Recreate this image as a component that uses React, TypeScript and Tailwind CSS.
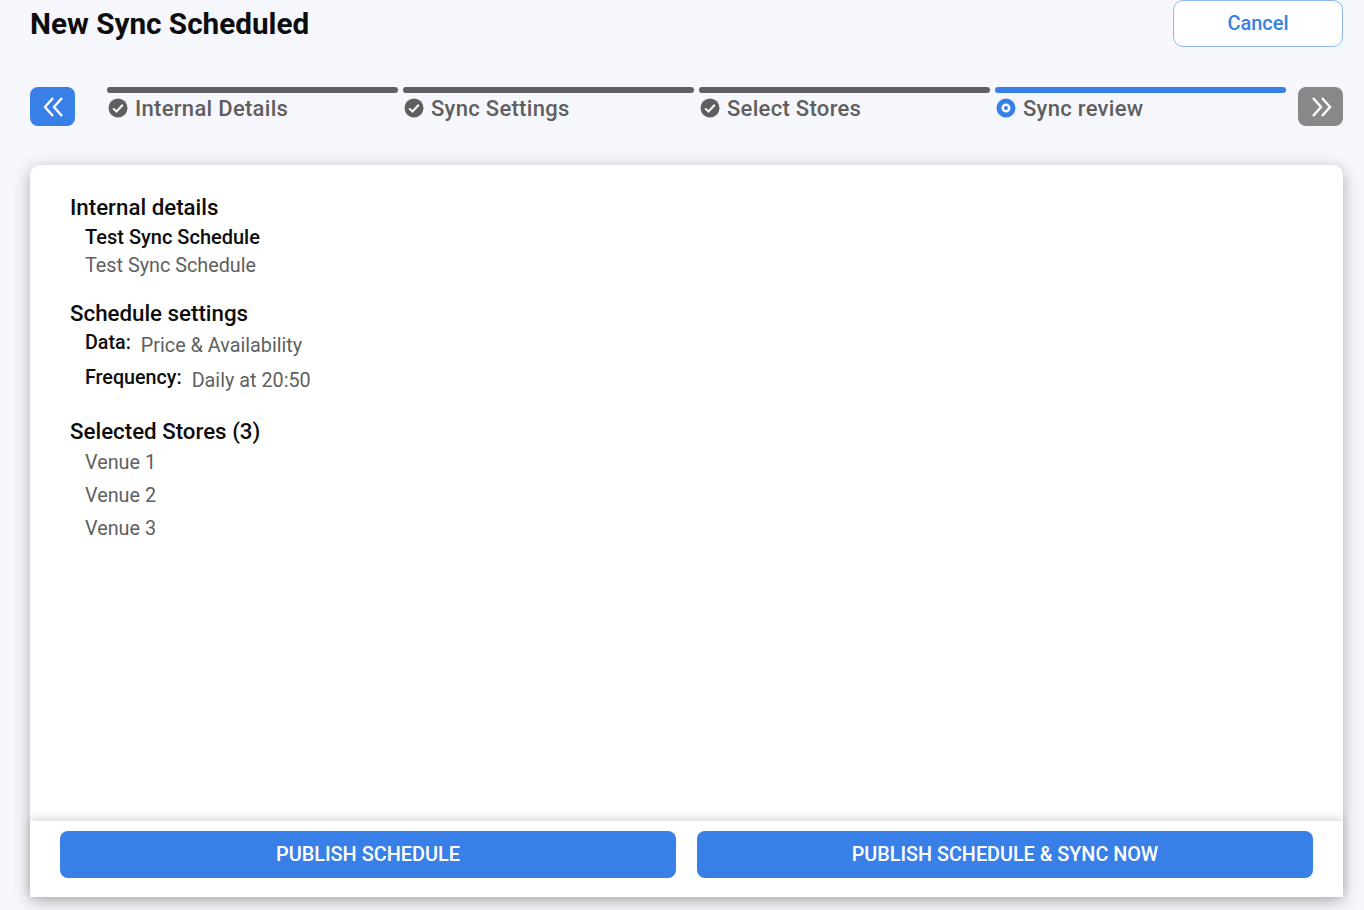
const steps = ["Internal Details", "Sync Settings", "Select Stores", "Sync review"]

const CheckIcon = () => (
  <svg viewBox="0 0 20 20" className="h-5 w-5 shrink-0">
    <circle cx="10" cy="10" r="9.5" fill="#5f5f5f" />
    <path d="M5.2 10.4l3.2 3.2 6.4-6.9" fill="none" stroke="#fff" strokeWidth="2" />
  </svg>
)

const ActiveIcon = () => (
  <svg viewBox="0 0 20 20" className="h-5 w-5 shrink-0">
    <circle cx="10" cy="10" r="7" fill="none" stroke="#3880e8" strokeWidth="5" />
    <circle cx="10" cy="10" r="2" fill="#3880e8" />
  </svg>
)

const DoubleChevron = ({ flip }: { flip?: boolean }) => (
  <svg viewBox="0 0 24 24" className={`h-6 w-6 ${flip ? "ml-[3px] rotate-180" : ""}`} fill="none" stroke="#fff" strokeWidth="2.4">
    <path d="M12 3l-8 9 8 9" />
    <path d="M21 3l-8 9 8 9" />
  </svg>
)

const Step = ({ label, active }: { label: string; active: boolean }) => (
  <div className="flex-1">
    <div className={`h-[6px] rounded-full ${active ? "bg-[#3880e8]" : "bg-[#5f5f5f]"}`} />
    <div className="mt-[2px] flex h-[26px] items-center gap-[7px] pl-[1px]">
      {active ? <ActiveIcon /> : <CheckIcon />}
      <span className="pt-[1px] text-[22px] leading-[26px] font-medium tracking-[0.3px] text-[#5f5f5f]">{label}</span>
    </div>
  </div>
)

const Detail = ({ label, value }: { label: string; value: string }) => (
  <div className="flex h-[35px] gap-[10px] pl-[15px]">
    <span className="text-[19.7px] leading-[26px] font-medium text-[#0d0d0d]">{label}</span>
    <span className="mt-[2px] text-[19.8px] leading-[28px] text-[#5f5f5f]">{value}</span>
  </div>
)

const Venue = ({ name }: { name: string }) => (
  <div className="h-[33px] pl-[15px] text-[19.8px] leading-[28px] text-[#5f5f5f]">{name}</div>
)

export default function App() {
  return (
    <div className="flex h-[910px] w-full flex-col overflow-hidden bg-[#f6f7fd] pr-[21px] pb-[13px] pl-[30px] font-['Roboto',sans-serif]">
      <div className="flex items-start justify-between">
        <h1 className="text-[29.7px] leading-[47px] font-bold text-[#0d0d0d]">New Sync Scheduled</h1>
        <button className="h-[47px] w-[170px] rounded-[10px] border border-[#8db8f2] bg-white pb-[2px] text-[20px] font-medium text-[#3880e8]">
          Cancel
        </button>
      </div>

      <div className="mt-[40px] flex items-start">
        <button className="flex h-[39px] w-[45px] items-center justify-center rounded-[8px] bg-[#3880e8]">
          <DoubleChevron />
        </button>
        <div className="mx-[12px] ml-[32px] flex flex-1 gap-[5px]">
          {steps.map((step, i) => (
            <Step key={step} label={step} active={i === steps.length - 1} />
          ))}
        </div>
        <button className="flex h-[39px] w-[45px] items-center justify-center rounded-[8px] bg-[#888888]">
          <DoubleChevron flip />
        </button>
      </div>

      <div className="mt-[39px] flex flex-1 flex-col rounded-t-[10px] bg-white shadow-[0_4px_16px_rgba(0,0,0,0.3)]">
        <div className="flex-1 pt-[28px] pl-[40px]">
          <h2 className="text-[22.3px] leading-[28px] font-medium text-[#0d0d0d]">Internal details</h2>
          <div className="mt-[2px] pl-[15px] text-[20px] leading-[28px] font-medium text-[#0d0d0d]">Test Sync Schedule</div>
          <div className="mt-[1px] pl-[15px] text-[19.8px] leading-[28px] text-[#5f5f5f]">Test Sync Schedule</div>

          <h2 className="mt-[19px] mb-[3px] text-[22.3px] leading-[28px] font-medium text-[#0d0d0d]">Schedule settings</h2>
          <Detail label="Data:" value="Price & Availability" />
          <Detail label="Frequency:" value="Daily at 20:50" />

          <h2 className="mt-[17px] mb-[4px] text-[22.3px] leading-[28px] font-medium text-[#0d0d0d]">Selected Stores (3)</h2>
          <Venue name="Venue 1" />
          <Venue name="Venue 2" />
          <Venue name="Venue 3" />
        </div>

        <div className="flex h-[76px] gap-[21px] px-[30px] pt-[10px] shadow-[0_-3px_8px_rgba(0,0,0,0.14)]">
          <button className="h-[47px] flex-1 rounded-[8px] bg-[#3880e8] text-[19.9px] font-medium text-white">
            PUBLISH SCHEDULE
          </button>
          <button className="h-[47px] flex-1 rounded-[8px] bg-[#3880e8] text-[19.8px] font-medium text-white">
            PUBLISH SCHEDULE &amp; SYNC NOW
          </button>
        </div>
      </div>
    </div>
  )
}
